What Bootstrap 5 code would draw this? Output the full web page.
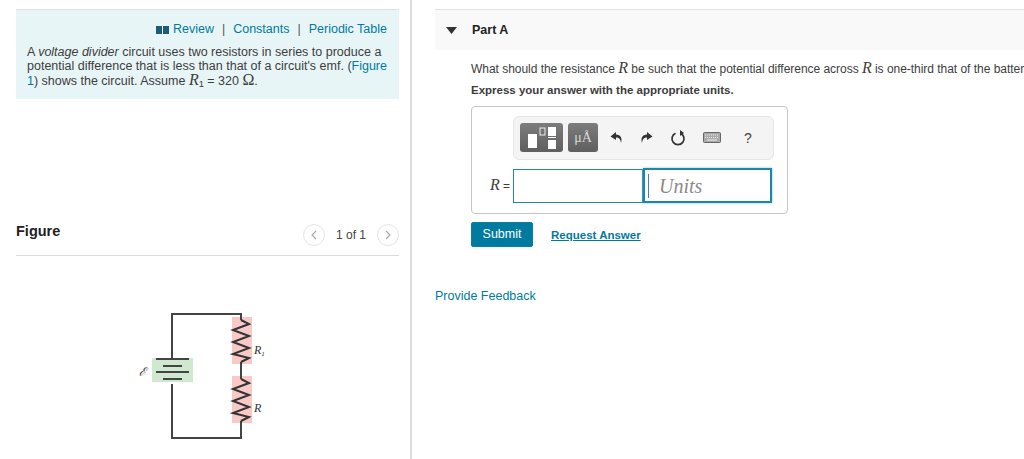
<!DOCTYPE html>
<html lang="en">
<head>
    <meta charset="UTF-8">
    <meta name="viewport" content="width=device-width, initial-scale=1.0">
    <title>Part A</title>
    <link href="https://cdn.jsdelivr.net/npm/bootstrap@5.3.2/dist/css/bootstrap.min.css" rel="stylesheet">
    <script src="https://cdn.jsdelivr.net/npm/bootstrap@5.3.2/dist/js/bootstrap.bundle.min.js"></script>
    <style>
        body {
            font-family: "Liberation Sans", Arial, sans-serif;
            font-size: 12.5px;
            line-height: 14px;
            color: #3d3d3d;
            height: 459px;
            overflow: hidden;
        }
        a { color: #007b9f; text-decoration: none; }
        .math { font-family: "Liberation Serif", serif; font-style: italic; font-size: 16px; }
        .math-up { font-family: "Liberation Serif", serif; font-size: 16px; }
        .left-pane { width: 412px; height: 459px; padding: 9px 11px 0 16px; border-right: 2px solid #dcdcdc; flex: none; }
        .intro-box { height: 90px; background: #e8f5f7; border-top: 1px solid #e2e2e2; padding: 12px 12px 0 11px; }
        .top-links { color: #555; font-size: 12.5px; gap: 8px; margin-bottom: 9px; }
        .figure-head { margin-top: 121px; height: 36px; border-bottom: 1px solid #dcdcdc; padding-bottom: 11px; }
        .figure-title { font-size: 14.5px; font-weight: 700; color: #222; }
        .pager { font-size: 12px; color: #444; gap: 7px; padding-top: 6px; }
        .pager-btn { width: 22px; height: 22px; border: 1px solid #e6e6e6; border-radius: 50%; }
        .circuit-wrap { padding: 56px 0 0 120px; }
        .circuit-label { font-family: "Liberation Serif", serif; font-style: italic; font-size: 12px; fill: #333; }
        .right-pane { padding: 9px 0 0 23px; width: 612px; flex: none; }
        .part-head { height: 41px; background: #f9f9f9; border-top: 1px solid #e2e2e2; padding-left: 11px; gap: 15px; font-weight: 700; font-size: 12.5px; color: #222; }
        .part-body { padding: 9px 0 0 36px; }
        .question { white-space: nowrap; font-size: 12px; height: 17px; line-height: 17px; letter-spacing: -0.03px; }
        .express { font-weight: 700; font-size: 11.5px; margin-top: 6px; height: 16px; line-height: 16px; }
        .answer-box { width: 317px; height: 108px; margin-top: 8px; border: 1px solid #c6c6c6; border-radius: 4px; padding: 9px 14px 0 0; }
        .tool-bar { width: 261px; height: 44px; margin-left: 41px; background: #f4f4f4; border: 1px solid #e6e6e6; border-radius: 6px; padding: 6px 0 0 6px; }
        .tool-btn { height: 29px; border-radius: 3px; background: linear-gradient(#7c7c7c, #5f5f5f); }
        .tool-tmpl { width: 43px; margin-right: 5px; }
        .tool-unit { width: 30px; color: #d8d8d8; font-family: "Liberation Serif", serif; font-size: 14px; }
        .tool-icons { margin-left: 12px; gap: 17px; height: 29px; }
        .tool-help { font-size: 14px; color: #444; margin-left: 6px; }
        .input-row { margin-top: 8px; }
        .r-label { width: 41px; text-align: right; padding-right: 3px; font-size: 12px; }
        .r-input { width: 130px; height: 34px; border: 1px solid #1f86a6; }
        .units-input { width: 129px; height: 35px; border: 2px solid #1f86a6; box-shadow: 0 0 2px #6cc0d8; padding-left: 3px; margin-left: 0; font-family: "Liberation Serif", serif; font-style: italic; font-size: 20px; color: #8a8a8a; gap: 10px; }
        .caret-line { width: 1px; height: 24px; background: #4a77d0; }
        .submit-btn { width: 62px; height: 25px; background: #007b9f; color: #fff; font-size: 12.5px; border: 1px solid #0a7f9f; border-radius: 2px; padding: 0; }
        .submit-btn:hover { background: #007b9f; color: #fff; }
        .action-row { margin-top: 8px; gap: 18px; }
        .req-link { font-weight: 700; font-size: 11.5px; text-decoration: underline; }
        .feedback { display: block; margin-top: 42px; font-size: 12.5px; }
    </style>
</head>
<body class="d-flex">
    <div class="left-pane">
        <div class="intro-box">
            <div class="top-links d-flex justify-content-end align-items-center">
                <a href="#" class="d-flex align-items-center gap-1">
                    <svg width="13" height="9" viewBox="0 0 13 9"><rect x="0" y="1" width="6" height="8" fill="#1d5b78"/><rect x="7" y="1" width="6" height="8" fill="#1d5b78"/></svg>
                    Review</a>
                <span>|</span>
                <a href="#">Constants</a>
                <span>|</span>
                <a href="#">Periodic Table</a>
            </div>
            <div>A <i>voltage divider</i> circuit uses two resistors in series to produce a potential difference that is less than that of a circuit's emf. (<a href="#">Figure 1</a>) shows the circuit. Assume <span class="math">R</span><sub>1</sub> = 320 <span class="math-up">Ω</span>.</div>
        </div>
        <div class="figure-head d-flex justify-content-between">
            <div class="figure-title pt-1">Figure</div>
            <div class="pager d-flex align-items-center">
                <span class="pager-btn d-flex align-items-center justify-content-center">
                    <svg width="8" height="10" viewBox="0 0 8 10"><path d="M6 1L2 5L6 9" fill="none" stroke="#aaa" stroke-width="1.2"/></svg>
                </span>
                <span class="px-1">1 of 1</span>
                <span class="pager-btn d-flex align-items-center justify-content-center">
                    <svg width="8" height="10" viewBox="0 0 8 10"><path d="M2 1L6 5L2 9" fill="none" stroke="#aaa" stroke-width="1.2"/></svg>
                </span>
            </div>
        </div>
        <div class="circuit-wrap">
            <svg width="150" height="135" viewBox="0 0 150 135" class="d-block">
                <rect x="96" y="5" width="20" height="47" fill="#f9c9c5"/>
                <rect x="96" y="64" width="20" height="47" fill="#f9c9c5"/>
                <rect x="16" y="46" width="41" height="24" fill="#cfe8cf"/>
                <path d="M36 47V2H105V8M105 50V67M105 109V126H36V72" fill="none" stroke="#444" stroke-width="2"/>
                <path d="M105 8L113 12L97 18L113 24L97 30L113 36L97 42L113 46L105 50" fill="none" stroke="#333" stroke-width="2"/>
                <path d="M105 67L113 71L97 77L113 83L97 89L113 95L97 101L113 105L105 109" fill="none" stroke="#333" stroke-width="2"/>
                <path d="M20 47H53M27 54H46M20 60H53M27 67H46" fill="none" stroke="#444" stroke-width="2"/>
                <text x="3" y="64" class="circuit-label" font-size="13">ℰ</text>
                <text x="118" y="42" class="circuit-label">R<tspan font-size="7" dy="2">1</tspan></text>
                <text x="118" y="100" class="circuit-label">R</text>
            </svg>
        </div>
    </div>
    <div class="right-pane">
        <div class="part-head d-flex align-items-center">
            <svg width="11" height="7" viewBox="0 0 11 7"><path d="M0 0H11L5.5 7Z" fill="#333"/></svg>
            <span>Part A</span>
        </div>
        <div class="part-body">
            <div class="question">What should the resistance <span class="math">R</span> be such that the potential difference across <span class="math">R</span> is one-third that of the battery?</div>
            <div class="express">Express your answer with the appropriate units.</div>
            <div class="answer-box">
                <div class="tool-bar d-flex align-items-start">
                    <div class="tool-btn tool-tmpl d-flex align-items-center justify-content-center">
                        <svg width="30" height="23" viewBox="0 0 30 23"><rect x="1" y="8" width="9" height="14" fill="#fff"/><rect x="13" y="2" width="5" height="7" fill="none" stroke="#eee"/><rect x="21" y="1" width="8" height="9" fill="#fff"/><rect x="21" y="11" width="8" height="1" fill="#fff"/><rect x="21" y="14" width="8" height="9" fill="#fff"/></svg>
                    </div>
                    <div class="tool-btn tool-unit d-flex align-items-center justify-content-center">μÅ</div>
                    <div class="tool-icons d-flex align-items-center">
                        <svg width="13" height="13" viewBox="0 0 13 13"><path d="M6 1L0.5 5.5L6 9V6.5C9 6.5 10.5 8 11 12C12.5 7 10.5 3.5 6 3.5Z" fill="#333"/></svg>
                        <svg width="13" height="13" viewBox="0 0 13 13"><path d="M7 1L12.5 5.5L7 9V6.5C4 6.5 2.5 8 2 12C0.5 7 2.5 3.5 7 3.5Z" fill="#333"/></svg>
                        <svg width="16" height="16" viewBox="0 0 16 16"><path d="M5.5 3.2A6 6 0 1 0 10.5 3.2" fill="none" stroke="#333" stroke-width="1.7"/><path d="M10 0L10 6L14 3Z" fill="#333"/></svg>
                        <svg width="18" height="11" viewBox="0 0 18 11"><rect x="0.5" y="0.5" width="17" height="10" rx="1" fill="#aaa" stroke="#666"/><path d="M2 3H16M2 5.500H16" stroke="#eee" stroke-dasharray="1 1"/><path d="M4 8H14" stroke="#eee"/></svg>
                        <span class="tool-help">?</span>
                    </div>
                </div>
                <div class="input-row d-flex align-items-center">
                    <div class="r-label"><span class="math">R</span> =</div>
                    <div class="r-input"></div>
                    <div class="units-input d-flex align-items-center"><span class="caret-line"></span><span>Units</span></div>
                </div>
            </div>
            <div class="action-row d-flex align-items-center">
                <button type="button" class="btn submit-btn">Submit</button>
                <a href="#" class="req-link">Request Answer</a>
            </div>
        </div>
        <a href="#" class="feedback">Provide Feedback</a>
    </div>
</body>
</html>
